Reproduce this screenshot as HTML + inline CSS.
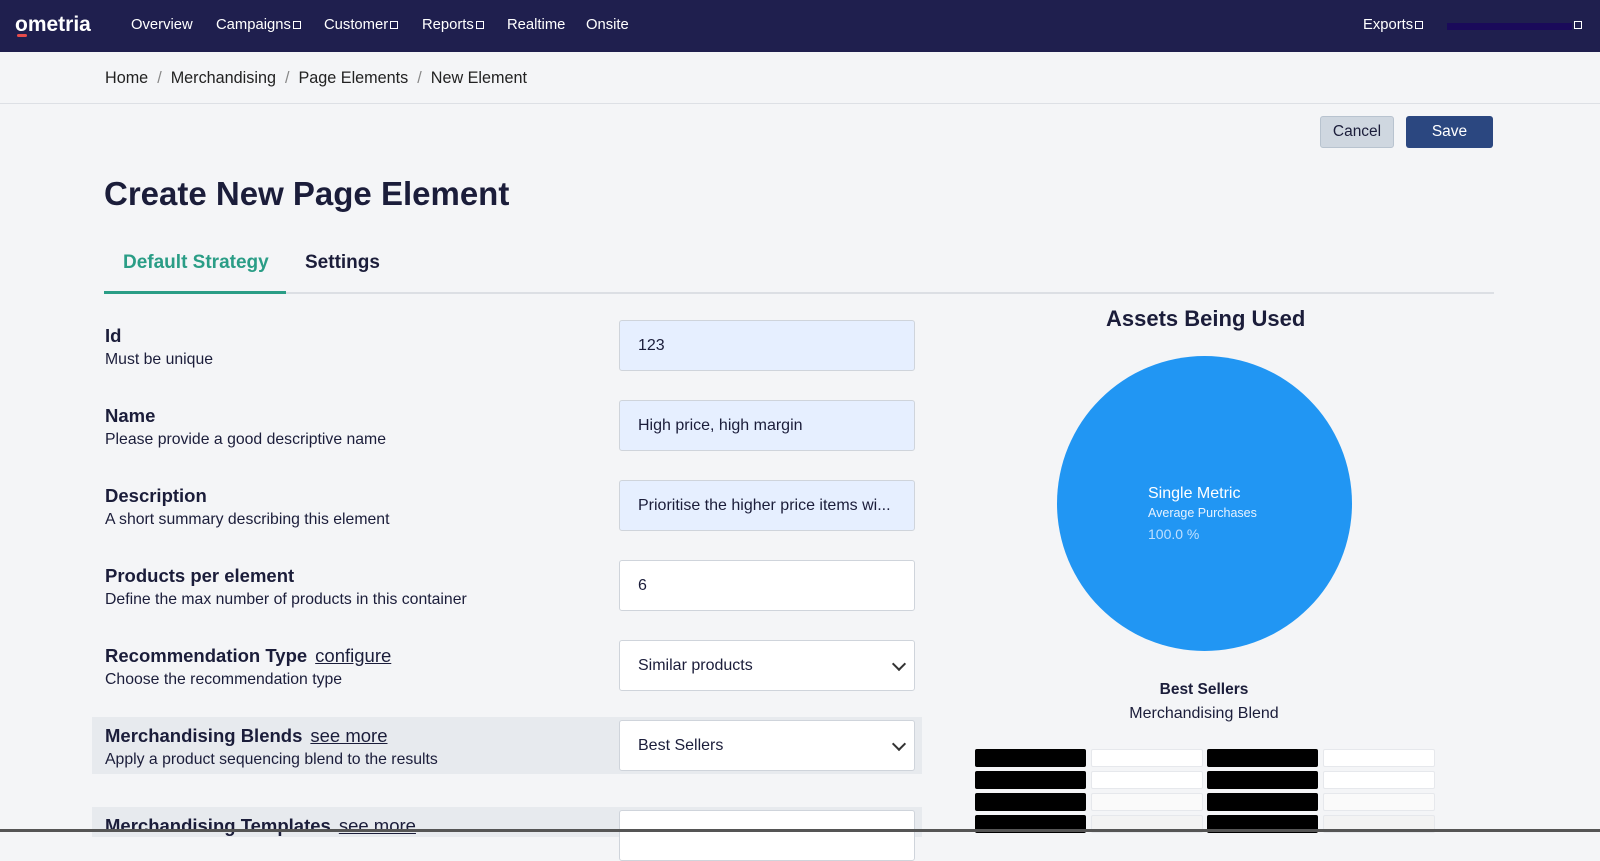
<!DOCTYPE html><html><head><style>
*{box-sizing:border-box;margin:0;padding:0}
body{width:1600px;height:832px;overflow:hidden;background:#f4f5f7;font-family:"Liberation Sans",sans-serif;color:#1b1d3a;position:relative}
.nav{height:52px;background:#1f1f4e;color:#fff;position:relative;font-size:14.8px}
.nav span{position:absolute;top:17px}
.sq{display:inline-block;width:8px;height:8px;border:1.5px solid #fff;margin-left:2px}
.bc{height:52px;border-bottom:1px solid #dde0e5;font-size:16.2px;padding:17px 0 0 105px;color:#222}
.bc i{font-style:normal;color:#888;margin:0 9px}
.abs{position:absolute}
.lbl{position:absolute;left:105px}
.lbl b{font-size:18.5px;display:block}
.lbl div{font-size:15.8px;margin-top:4px}
.lbl u{font-weight:normal;font-size:18.5px;margin-left:8px}
.inp{position:absolute;left:619px;width:296px;height:51px;border:1px solid #cfd4db;border-radius:3px;background:#fff;font-size:16px;padding:16px 18px}
.blue{background:#e6efff}
.chev{position:absolute;right:10px;top:18px;width:10px;height:10px;border-right:2px solid #333;border-bottom:2px solid #333;transform:rotate(45deg)}
.bar{position:absolute;height:18px;border-radius:2px}
.w{border:1px solid #e6e8ec}
</style></head><body>
<div class="nav">
<span style="left:15px;top:13px;font-size:21px;font-weight:bold">ometria</span>
<div class="abs" style="left:17px;top:34px;width:10px;height:3px;background:#e64b4b;border-radius:2px"></div>
<span style="left:131px">Overview</span>
<span style="left:216px">Campaigns<i class="sq"></i></span>
<span style="left:324px">Customer<i class="sq"></i></span>
<span style="left:422px">Reports<i class="sq"></i></span>
<span style="left:507px">Realtime</span>
<span style="left:586px">Onsite</span>
<span style="left:1363px">Exports<i class="sq"></i></span>
<div class="abs" style="left:1447px;top:23px;width:125px;height:7px;background:#1a0a5a"></div>
<span style="left:1572px"><i class="sq"></i></span>
</div>
<div class="bc">Home<i>/</i>Merchandising<i>/</i>Page Elements<i>/</i>New Element</div>
<div class="abs" style="left:1320px;top:116px;width:74px;height:32px;background:#cfd7e0;border:1px solid #b8c3cf;border-radius:3px;font-size:15.5px;text-align:center;line-height:30px">Cancel</div>
<div class="abs" style="left:1406px;top:116px;width:87px;height:32px;background:#2b4780;border-radius:3px;color:#fff;font-size:15.5px;text-align:center;line-height:32px">Save</div>
<div class="abs" style="left:104px;top:175px;font-size:33px;font-weight:bold">Create New Page Element</div>
<div class="abs" style="left:123px;top:252px;font-size:19px;font-weight:bold;color:#2a9d86">Default Strategy</div>
<div class="abs" style="left:305px;top:252px;font-size:19px;font-weight:bold">Settings</div>
<div class="abs" style="left:104px;top:292px;width:1390px;height:2px;background:#dcdfe4"></div>
<div class="abs" style="left:104px;top:291px;width:182px;height:3px;background:#2a9d86"></div>
<div class="abs" style="left:92px;top:717px;width:830px;height:57px;background:#e7eaee"></div>
<div class="abs" style="left:92px;top:807px;width:830px;height:30px;background:#e7eaee"></div>
<div class="lbl" style="top:325px"><b>Id</b><div>Must be unique</div></div>
<div class="lbl" style="top:405px"><b>Name</b><div>Please provide a good descriptive name</div></div>
<div class="lbl" style="top:485px"><b>Description</b><div>A short summary describing this element</div></div>
<div class="lbl" style="top:565px"><b>Products per element</b><div>Define the max number of products in this container</div></div>
<div class="lbl" style="top:645px"><b>Recommendation Type<u>configure</u></b><div>Choose the recommendation type</div></div>
<div class="lbl" style="top:725px"><b>Merchandising Blends<u>see more</u></b><div>Apply a product sequencing blend to the results</div></div>
<div class="lbl" style="top:815px"><b>Merchandising Templates<u>see more</u></b></div>
<div class="inp blue" style="top:320px">123</div>
<div class="inp blue" style="top:400px">High price, high margin</div>
<div class="inp blue" style="top:480px">Prioritise the higher price items wi...</div>
<div class="inp" style="top:560px">6</div>
<div class="inp" style="top:640px">Similar products<i class="chev"></i></div>
<div class="inp" style="top:720px">Best Sellers<i class="chev"></i></div>
<div class="inp" style="top:810px"></div>
<div class="abs" style="left:1106px;top:306px;font-size:22px;font-weight:bold">Assets Being Used</div>
<div class="abs" style="left:1057px;top:356px;width:295px;height:295px;border-radius:50%;background:#2196f3"></div>
<div class="abs" style="left:1148px;top:485px;color:#fff;font-size:16px">Single Metric</div>
<div class="abs" style="left:1148px;top:506px;color:#e6f2ff;font-size:12.5px">Average Purchases</div>
<div class="abs" style="left:1148px;top:526px;color:#bfe0ff;font-size:14px">100.0 %</div>
<div class="abs" style="left:1100px;top:681px;width:208px;text-align:center;font-size:15.5px;font-weight:bold">Best Sellers</div>
<div class="abs" style="left:1080px;top:705px;width:248px;text-align:center;font-size:16px">Merchandising Blend</div>
<div class="bar" style="left:975px;top:749px;width:111px;background:#000"></div><div class="bar w" style="left:1091px;top:749px;width:112px;background:#fff"></div><div class="bar" style="left:1207px;top:749px;width:111px;background:#000"></div><div class="bar w" style="left:1323px;top:749px;width:112px;background:#fff"></div>
<div class="bar" style="left:975px;top:771px;width:111px;background:#000"></div><div class="bar w" style="left:1091px;top:771px;width:112px;background:#fff"></div><div class="bar" style="left:1207px;top:771px;width:111px;background:#000"></div><div class="bar w" style="left:1323px;top:771px;width:112px;background:#fff"></div>
<div class="bar" style="left:975px;top:793px;width:111px;background:#000"></div><div class="bar w" style="left:1091px;top:793px;width:112px;background:#fafafa"></div><div class="bar" style="left:1207px;top:793px;width:111px;background:#000"></div><div class="bar w" style="left:1323px;top:793px;width:112px;background:#fafafa"></div>
<div class="bar" style="left:975px;top:815px;width:111px;background:#000"></div><div class="bar w" style="left:1091px;top:815px;width:112px;background:#f3f3f3"></div><div class="bar" style="left:1207px;top:815px;width:111px;background:#000"></div><div class="bar w" style="left:1323px;top:815px;width:112px;background:#f3f3f3"></div>
<div class="abs" style="left:0;top:829px;width:1600px;height:3px;background:#555"></div>
</body></html>
